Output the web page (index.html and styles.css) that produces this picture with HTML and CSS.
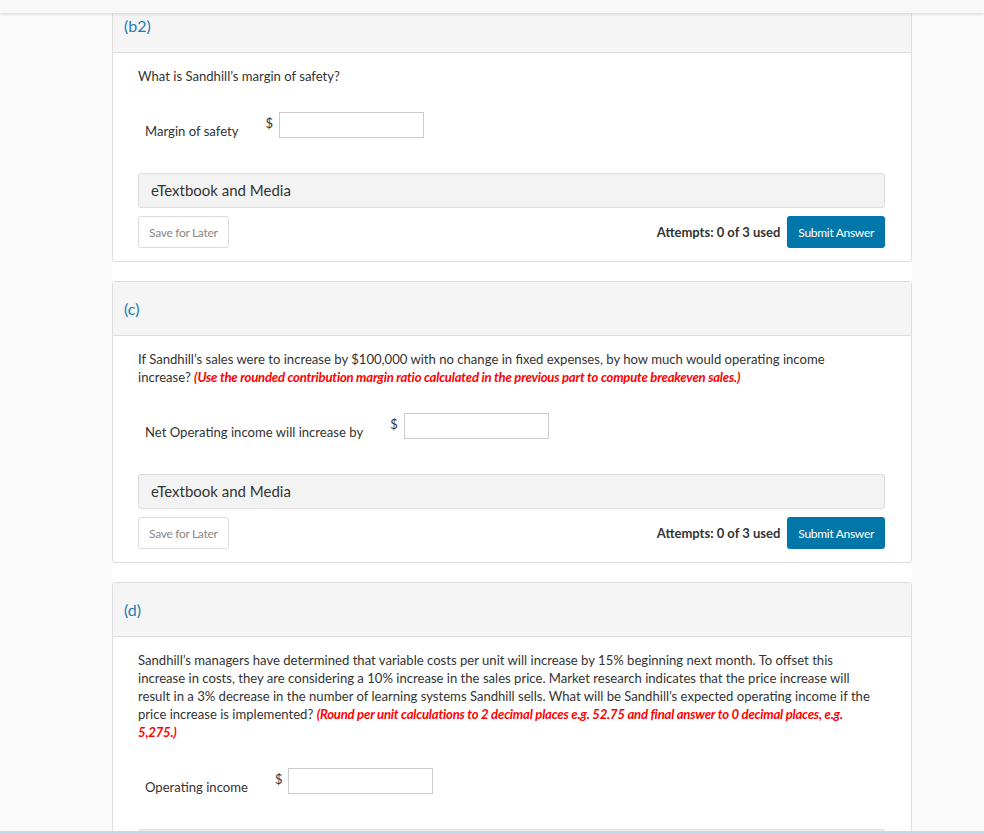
FILE: index.html
```html
<!DOCTYPE html>
<html lang="en">
<head>
    <meta charset="UTF-8">
    <meta name="viewport" content="width=device-width, initial-scale=1.0">
    <title>Question Parts</title>
    <link rel="stylesheet" href="styles.css">
</head>
<body>

    <div class="topbar"></div>

    <div class="content">

        <div class="part">
            <div class="part-header">(b2)</div>
            <div class="part-body">
                <p class="question">What is Sandhill’s margin of safety?</p>
                <div class="answer-row">
                    <span class="answer-label">Margin of safety</span>
                    <span class="currency">$</span>
                    <input type="text" class="answer-input">
                </div>
                <div class="media-box">eTextbook and Media</div>
                <div class="actions">
                    <button class="save-btn">Save for Later</button>
                    <span class="attempts">Attempts: 0 of 3 used</span>
                    <button class="submit-btn">Submit Answer</button>
                </div>
            </div>
        </div>

        <div class="part">
            <div class="part-header">(c)</div>
            <div class="part-body">
                <p class="question">If Sandhill’s sales were to increase by $100,000 with no change in fixed expenses, by how much would operating income increase? <span class="hint">(Use the rounded contribution margin ratio calculated in the previous part to compute breakeven sales.)</span></p>
                <div class="answer-row">
                    <span class="answer-label">Net Operating income will increase by</span>
                    <span class="currency">$</span>
                    <input type="text" class="answer-input">
                </div>
                <div class="media-box">eTextbook and Media</div>
                <div class="actions">
                    <button class="save-btn">Save for Later</button>
                    <span class="attempts">Attempts: 0 of 3 used</span>
                    <button class="submit-btn">Submit Answer</button>
                </div>
            </div>
        </div>

        <div class="part">
            <div class="part-header">(d)</div>
            <div class="part-body">
                <p class="question">Sandhill’s managers have determined that variable costs per unit will increase by 15% beginning next month. To offset this increase in costs, they are considering a 10% increase in the sales price. Market research indicates that the price increase will result in a 3% decrease in the number of learning systems Sandhill sells. What will be Sandhill’s expected operating income if the price increase is implemented? <span class="hint">(Round per unit calculations to 2 decimal places e.g. 52.75 and final answer to 0 decimal places, e.g. 5,275.)</span></p>
                <div class="answer-row">
                    <span class="answer-label">Operating income</span>
                    <span class="currency">$</span>
                    <input type="text" class="answer-input">
                </div>
                <div class="media-box">eTextbook and Media</div>
                <div class="actions">
                    <button class="save-btn">Save for Later</button>
                    <span class="attempts">Attempts: 0 of 3 used</span>
                    <button class="submit-btn">Submit Answer</button>
                </div>
            </div>
        </div>

    </div>

    <div class="bottombar"></div>

</body>
</html>
```

FILE: styles.css
```css
body {
    font-family: Lato, "Open Sans", sans-serif;
    margin: 0;
    padding: 0;
    background-color: #fafafa;
    color: #333;
    overflow: hidden;
}

.topbar {
    position: fixed;
    top: 0;
    left: 0;
    width: 100%;
    height: 13px;
    background-color: #f8f8f8;
    box-shadow: 0 1px 3px rgba(0, 0, 0, 0.15);
    z-index: 10;
}

.bottombar {
    position: fixed;
    bottom: 0;
    left: 0;
    width: 100%;
    height: 3px;
    background-color: #c8d6ea;
    z-index: 10;
}

.content {
    margin-top: -2px;
    margin-left: 112px;
    width: 800px;
    background-color: white;
}

.part {
    border: 1px solid #ddd;
    border-radius: 3px;
    margin-bottom: 19px;
    background-color: white;
}

.part-header {
    background-color: #f5f5f5;
    border-bottom: 1px solid #ddd;
    height: 53px;
    line-height: 53px;
    padding-left: 11px;
    font-size: 16px;
    color: #1e7ab5;
}

.part-body {
    padding: 14px 26px 13px 25px;
}

.question {
    margin: 0;
    font-size: 13.1px;
    line-height: 18px;
    padding-right: 8px;
}

.hint {
    color: #f00;
    font-weight: bold;
    font-style: italic;
    letter-spacing: -0.2px;
}

.answer-row {
    display: flex;
    align-items: flex-start;
    margin-top: 27px;
    padding-left: 7px;
}

.answer-label {
    font-size: 13.1px;
    margin-top: 11px;
    margin-right: 27px;
}

.currency {
    font-size: 13px;
    margin-top: 3px;
    margin-right: 6px;
}

.answer-input {
    width: 145px;
    height: 26px;
    box-sizing: border-box;
    border: 1px solid #ccc;
    margin: 0;
    padding: 0 6px;
}

.media-box {
    margin-top: 34px;
    background-color: #f3f3f3;
    border: 1px solid #ddd;
    border-radius: 3px;
    height: 35px;
    box-sizing: border-box;
    line-height: 33px;
    padding-left: 12px;
    font-size: 15px;
}

.actions {
    display: flex;
    align-items: center;
    margin-top: 8px;
}

.save-btn {
    font-family: Lato, sans-serif;
    background-color: white;
    color: #888;
    border: 1px solid #ddd;
    border-radius: 3px;
    height: 32px;
    padding: 0 10px;
    font-size: 12px;
    letter-spacing: -0.3px;
}

.attempts {
    margin-left: auto;
    margin-right: 7px;
    font-size: 13px;
    font-weight: bold;
    color: #333;
}

.submit-btn {
    font-family: Lato, sans-serif;
    background-color: #0077a8;
    color: white;
    border: none;
    border-radius: 3px;
    height: 32px;
    padding: 0 11px;
    font-size: 12px;
    letter-spacing: -0.3px;
}
```
